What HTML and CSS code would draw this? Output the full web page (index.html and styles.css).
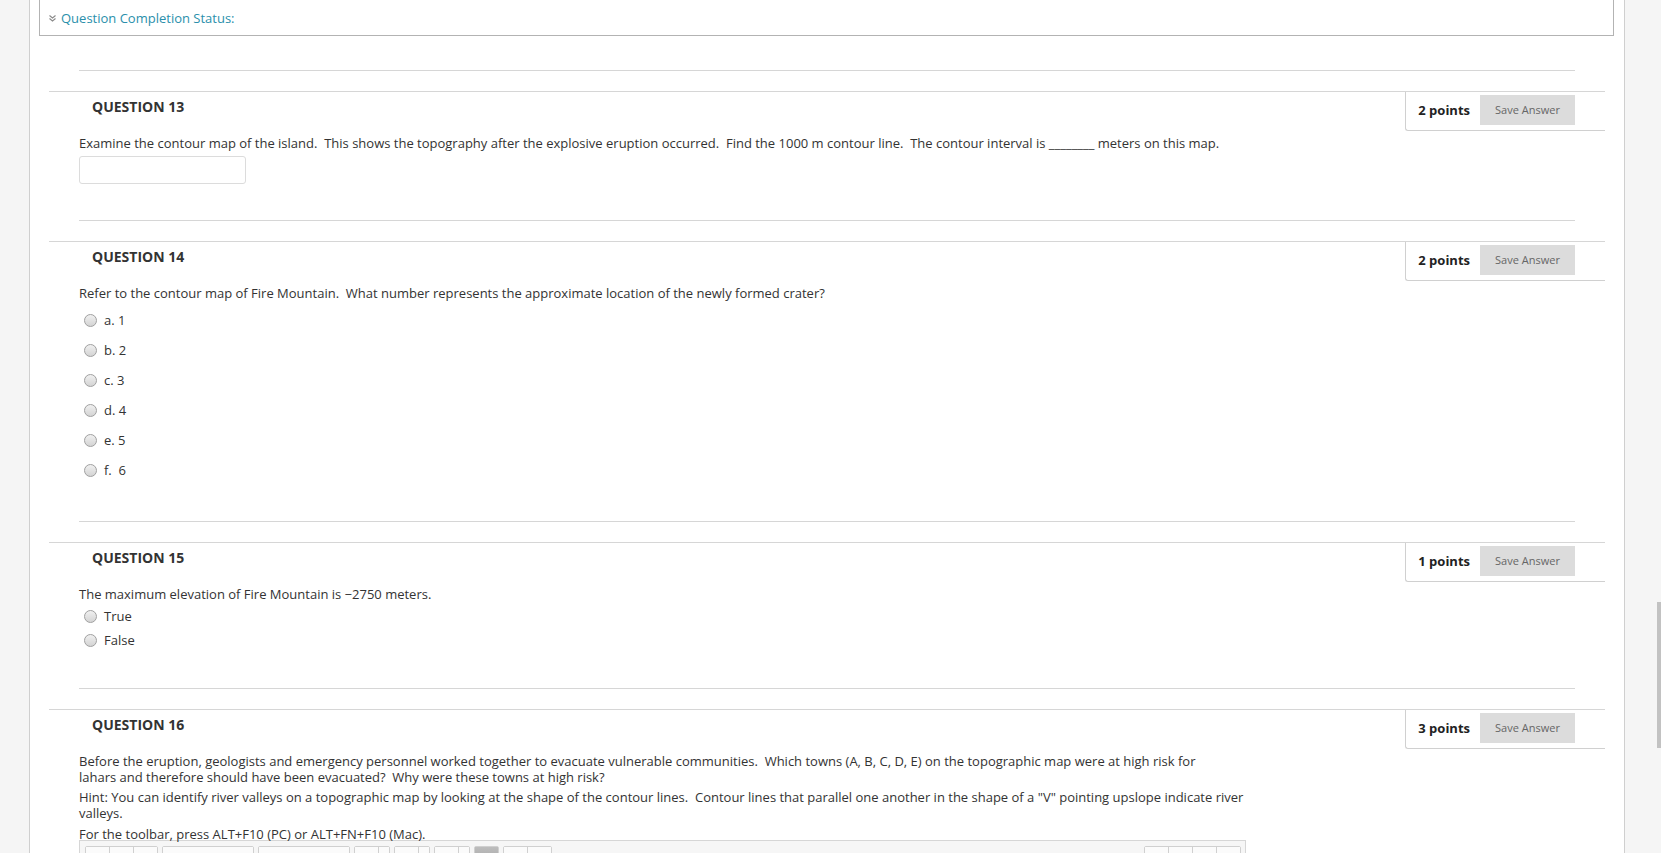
FILE: index.html
```html
<!DOCTYPE html>
<html lang="en">
<head>
    <meta charset="UTF-8">
    <meta name="viewport" content="width=device-width, initial-scale=1.0">
    <title>Take Test</title>
    <link rel="stylesheet" href="styles.css">
</head>
<body>

<div class="page">
    <!--Completion status bar-->
    <div class="status-box">
        <svg class="status-icon" width="7" height="7" viewBox="0 0 7 7">
            <path d="M0.5 0.5 L3.5 3 L6.5 0.5 M0.5 3.5 L3.5 6 L6.5 3.5" fill="none" stroke="#8a8a8a" stroke-width="1.1"/>
        </svg>
        <a class="status-link" href="#">Question Completion Status:</a>
    </div>

    <!--Question 13-->
    <div class="divider"></div>
    <div class="question">
        <div class="q-head">
            <h3 class="q-title">QUESTION 13</h3>
            <div class="points">
                <span class="points-text">2 points</span>
                <button class="save-btn">Save Answer</button>
            </div>
        </div>
        <div class="q-body">
            <p class="q-text">Examine the contour map of the island.&nbsp; This shows the topography after the explosive eruption occurred.&nbsp; Find the 1000 m contour line.&nbsp; The contour interval is ________ meters on this map.</p>
            <input type="text" class="answer-input">
        </div>
    </div>

    <!--Question 14-->
    <div class="divider"></div>
    <div class="question">
        <div class="q-head">
            <h3 class="q-title">QUESTION 14</h3>
            <div class="points">
                <span class="points-text">2 points</span>
                <button class="save-btn">Save Answer</button>
            </div>
        </div>
        <div class="q-body">
            <p class="q-text">Refer to the contour map of Fire Mountain.&nbsp; What number represents the approximate location of the newly formed crater?</p>
            <ul class="choices">
                <li><span class="radio"></span>a. 1</li>
                <li><span class="radio"></span>b. 2</li>
                <li><span class="radio"></span>c. 3</li>
                <li><span class="radio"></span>d. 4</li>
                <li><span class="radio"></span>e. 5</li>
                <li><span class="radio"></span>f.&nbsp; 6</li>
            </ul>
        </div>
    </div>

    <!--Question 15-->
    <div class="divider"></div>
    <div class="question">
        <div class="q-head">
            <h3 class="q-title">QUESTION 15</h3>
            <div class="points">
                <span class="points-text">1 points</span>
                <button class="save-btn">Save Answer</button>
            </div>
        </div>
        <div class="q-body">
            <p class="q-text">The maximum elevation of Fire Mountain is −2750 meters.</p>
            <ul class="choices tight">
                <li><span class="radio"></span>True</li>
                <li><span class="radio"></span>False</li>
            </ul>
        </div>
    </div>

    <!--Question 16-->
    <div class="divider"></div>
    <div class="question">
        <div class="q-head">
            <h3 class="q-title">QUESTION 16</h3>
            <div class="points">
                <span class="points-text">3 points</span>
                <button class="save-btn">Save Answer</button>
            </div>
        </div>
        <div class="q-body essay">
            <p class="q-para">Before the eruption, geologists and emergency personnel worked together to evacuate vulnerable communities.&nbsp; Which towns (A, B, C, D, E) on the topographic map were at high risk for<br>lahars and therefore should have been evacuated?&nbsp; Why were these towns at high risk?</p>
            <p class="q-para">Hint: You can identify river valleys on a topographic map by looking at the shape of the contour lines.&nbsp; Contour lines that parallel one another in the shape of a "V" pointing upslope indicate river valleys.</p>
            <p class="q-para toolbar-hint">For the toolbar, press ALT+F10 (PC) or ALT+FN+F10 (Mac).</p>
            <div class="toolbar">
                <div class="tb-group"><span class="tb-btn"></span><span class="tb-btn"></span><span class="tb-btn"></span></div>
                <div class="tb-group"><span class="tb-btn wide"></span></div>
                <div class="tb-group"><span class="tb-btn wide"></span></div>
                <div class="tb-group"><span class="tb-btn"></span><span class="tb-btn arrow"></span></div>
                <div class="tb-group"><span class="tb-btn"></span><span class="tb-btn arrow"></span></div>
                <div class="tb-group"><span class="tb-btn"></span><span class="tb-btn arrow"></span></div>
                <div class="tb-group"><span class="tb-btn active"></span></div>
                <div class="tb-group"><span class="tb-btn"></span><span class="tb-btn"></span></div>
                <div class="tb-spacer"></div>
                <div class="tb-group"><span class="tb-btn"></span><span class="tb-btn"></span><span class="tb-btn"></span><span class="tb-btn"></span></div>
            </div>
        </div>
    </div>
</div>

<div class="scroll-thumb"></div>

</body>
</html>
```

FILE: styles.css
```css
body {
    font-family: "Open Sans", "Liberation Sans", sans-serif;
    font-size: 13px;
    color: #333;
    background-color: #f5f5f5;
    margin: 0;
    overflow: hidden;
}

.page {
    margin-left: 29px;
    width: 1594px;
    height: 853px;
    background: #fff;
    border-left: 1px solid #cfcfcf;
    border-right: 1px solid #cfcfcf;
    overflow: hidden;
}

/* completion status */
.status-box {
    display: flex;
    align-items: center;
    height: 35px;
    margin: 0 10px 34px 9px;
    padding-left: 9px;
    border: 1px solid #b3b3b3;
    border-top: none;
}

.status-icon {
    margin-right: 5px;
    margin-top: 1px;
}

.status-link {
    color: #2a8fab;
    text-decoration: none;
}

/* question blocks */
.divider {
    height: 1px;
    background: #d6d6d6;
    margin: 0 49px;
}

.question {
    margin: 20px 19px 0 19px;
    border-top: 1px solid #d6d6d6;
    padding-bottom: 36px;
}

.q-head {
    display: flex;
    justify-content: space-between;
    align-items: flex-start;
}

.q-title {
    margin: 0;
    padding: 6px 0 0 43px;
    font-size: 14px;
    line-height: 18px;
    font-weight: 700;
    color: #333;
}

.points {
    display: flex;
    align-items: center;
    gap: 10px;
    padding: 3px 30px 5px 12px;
    border-left: 1px solid #d0d0d0;
    border-bottom: 1px solid #d0d0d0;
    border-bottom-left-radius: 3px;
}

.points-text {
    font-weight: 700;
    color: #222;
    margin-top: -1px;
}

.save-btn {
    width: 95px;
    height: 30px;
    border: none;
    background: #dcdcdc;
    color: #666;
    font-family: inherit;
    font-size: 11px;
    padding: 0 0 1px 0;
}

.q-body {
    padding-left: 30px;
}

.q-text {
    margin: 3px 0 0 0;
    line-height: 18px;
}

.answer-input {
    display: block;
    margin-top: 4px;
    width: 167px;
    height: 28px;
    box-sizing: border-box;
    border: 1px solid #dcdcdc;
    border-radius: 3px;
}

.choices {
    list-style: none;
    margin: 3px 0 0 0;
    padding: 0 0 0 5px;
}

.choices li {
    display: flex;
    align-items: center;
    height: 30px;
}

.choices.tight {
    margin-top: 1px;
}

.choices.tight li {
    height: 24px;
}

.radio {
    width: 13px;
    height: 13px;
    box-sizing: border-box;
    border-radius: 50%;
    border: 1px solid #a0a0a0;
    background: linear-gradient(#f0f0f0, #d4d4d4);
    margin-right: 7px;
}

/* essay question */
.essay .q-para {
    margin: 4px 0 0 0;
    line-height: 16px;
    max-width: 1175px;
}

.essay .q-para:first-child {
    margin-top: 4px;
}

.essay .toolbar-hint {
    margin-top: 5px;
}

.toolbar {
    display: flex;
    gap: 4px;
    width: 1156px;
    height: 40px;
    margin-top: -2px;
    padding: 5px 4px 0 5px;
    border: 1px solid #d6d6d6;
    background: #f6f6f6;
}

.tb-group {
    display: flex;
    border: 1px solid #d0d0d0;
    border-radius: 2px;
    height: 24px;
}

.tb-btn {
    width: 23px;
    height: 24px;
    background: #fbfbfb;
    border-left: 1px solid #d0d0d0;
}

.tb-btn:first-child {
    border-left: none;
}

.tb-btn.wide {
    width: 90px;
}

.tb-btn.arrow {
    width: 10px;
}

.tb-btn.active {
    background: linear-gradient(#bdbdbd, #9c9c9c);
}

.tb-spacer {
    flex: 1;
}

.scroll-thumb {
    position: absolute;
    left: 1657px;
    top: 602px;
    width: 4px;
    height: 146px;
    background: #c2c2c2;
}
```
